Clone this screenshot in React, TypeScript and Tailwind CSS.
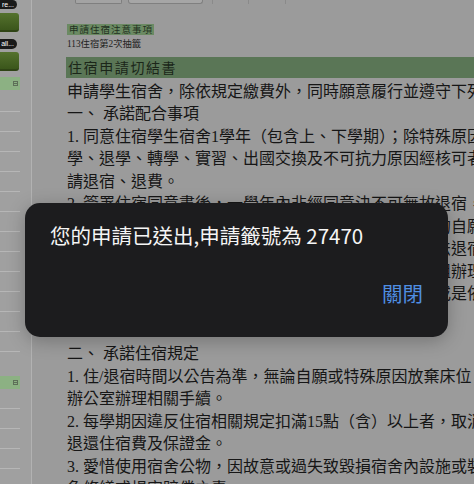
import React from "react";

const sec1 = [
  "申請學生宿舍，除依規定繳費外，同時願意履行並遵守下列住宿規定：",
  "一、 承諾配合事項",
  "1. 同意住宿學生宿舍1學年（包含上、下學期）；除特殊原因（如休",
  "學、退學、轉學、實習、出國交換及不可抗力原因經核可者之外），不得申",
  "請退宿、退費。",
  "2. 簽署住宿同意書後，一學年內非經同意決不可無故退宿，請勿",
  "經核准退宿者，住宿費依學校規定比例退還；屬個人的自願放棄",
  "者，恕不退還住宿費。如有特殊情形應檢附證明，無法退宿者",
  "者，須於期限內至宿舍辦公室填寫申請表，再至出納組辦理手續",
  "退費手續；如未依規定辦理者，其住宿費不予退還，或是依",
  "依校規處理。",
];

const sec2 = [
  "二、 承諾住宿規定",
  "1. 住/退宿時間以公告為準，無論自願或特殊原因放棄床位，均應至宿舍",
  "辦公室辦理相關手續。",
  "2. 每學期因違反住宿相關規定扣滿15點（含）以上者，取消住宿資格，不",
  "退還住宿費及保證金。",
  "3. 愛惜使用宿舍公物，因故意或過失致毀損宿舍內設施或裝備者，應負",
  "負修繕或損害賠償之責。",
];

function Line({ t }: { t: string }) {
  return <div className="h-[22.5px] leading-[22.5px] whitespace-nowrap">{t}</div>;
}

function Collapse() {
  return (
    <div className="w-[5px] h-[5px] border border-[#5d6f58] flex items-center justify-center">
      <div className="w-[3px] h-px bg-[#5d6f58]" />
    </div>
  );
}

export default function App() {
  const label = "申請住宿注意事項".split("");
  return (
    <div className="relative w-[474px] h-[484px] overflow-hidden flex bg-[#9b9b9b] font-['Liberation_Serif','Noto_Sans_CJK_TC',serif]">
      {/* sidebar */}
      <div className="w-[32px] shrink-0 border-r border-[#b2b2b2] bg-[#a0a0a0] flex flex-col">
        <div className="h-[9px] w-[17px] bg-[#1a1a1a] rounded-r-full text-white text-[7px] leading-[9px] text-right pr-[3px] font-['Liberation_Sans',sans-serif] overflow-hidden">re...</div>
        <div className="mt-[4px] h-[19px] w-[19px] rounded-r-[3px] bg-gradient-to-b from-[#55722e] to-[#3b561b] border-b-[2px] border-[#2f4415]" />
        <div className="mt-[7px] h-[10px] w-[17px] bg-[#1a1a1a] rounded-r-full text-white text-[7px] leading-[10px] text-right pr-[3px] font-['Liberation_Sans',sans-serif] overflow-hidden">all...</div>
        <div className="mt-[3px] h-[19px] w-[19px] rounded-r-[3px] bg-gradient-to-b from-[#55722e] to-[#3b561b] border-b-[2px] border-[#2f4415]" />
        <div className="mt-[6px] h-[13px] w-[20px] bg-[#8cb183] flex items-center justify-end pr-[2px]">
          <Collapse />
        </div>
        <div className="h-[22px] w-[20px] border-b border-[#b6b6b6]" />
        {Array.from({ length: 12 }).map((_, i) => (
          <div key={i} className="h-[20px] w-[20px] border-b border-[#b6b6b6]" />
        ))}
        <div className="mt-[24px] h-[13px] w-[20px] bg-[#8cb183] flex items-center justify-end pr-[2px]">
          <Collapse />
        </div>
        {Array.from({ length: 4 }).map((_, i) => (
          <div key={i} className="h-[20px] w-[20px] border-b border-[#b6b6b6]" />
        ))}
      </div>

      {/* content */}
      <div className="flex-1 min-w-0 pl-[35px] flex flex-col text-[#161616]">
        <div className="h-[4px] flex items-end">
          <div className="ml-[8px] w-[47px] h-[4px] bg-[#a3a3a3] border-b border-x border-[#7f7f7f] rounded-b-[2px]" />
          <div className="ml-[6px] w-[75px] h-[4px] bg-[#a6a6a6] border-b border-x border-[#808080] rounded-b-[3px]" />
          <div className="ml-[9px] w-px h-[4px] bg-[#8a8a8a]" />
          <div className="ml-[35px] w-px h-[4px] bg-[#8a8a8a]" />
          <div className="ml-[36px] w-px h-[4px] bg-[#8a8a8a]" />
        </div>
        <div className="mt-[20px] w-[87px] h-[11px] px-[2px] bg-[#6b8a63] flex justify-between text-[9.5px] leading-[11px] text-[#22301f] font-['Noto_Sans_CJK_TC',sans-serif]">
          {label.map((c, i) => (
            <span key={i}>{c}</span>
          ))}
        </div>
        <div className="mt-[4px] h-[10px] text-[9.3px] leading-[10px] whitespace-nowrap text-[#222]">113住宿第2次抽籤</div>
        <div className="mt-[8px] -ml-[1px] h-[21px] bg-[#5a7656] pl-[2px] text-[14px] leading-[21px] tracking-[1.6px] text-[#1b2619] font-['Noto_Sans_CJK_TC',sans-serif] whitespace-nowrap">
          住宿申請切結書
        </div>
        <div className="mt-[2.5px] text-[16px]">
          {sec1.map((t, i) => (
            <Line key={i} t={t} />
          ))}
        </div>
        <div className="mt-[15px] text-[16px]">
          {sec2.map((t, i) => (
            <Line key={i} t={t} />
          ))}
        </div>
      </div>

      {/* dialog */}
      <div className="absolute left-[25px] top-[203px] w-[423px] h-[134px] rounded-[15px] bg-[#1c1c1e] shadow-[0_4px_18px_rgba(0,0,0,0.25)] px-[25px] pt-[19px] flex flex-col font-['Noto_Sans_CJK_TC',sans-serif]">
        <div className="text-[20.5px] leading-[26px] text-[#f5f5f5] whitespace-nowrap">您的申請已送出,申請籤號為 27470</div>
        <div className="mt-[32px] self-end text-[20.5px] leading-[26px] text-[#4f8ee2]">關閉</div>
      </div>
    </div>
  );
}
